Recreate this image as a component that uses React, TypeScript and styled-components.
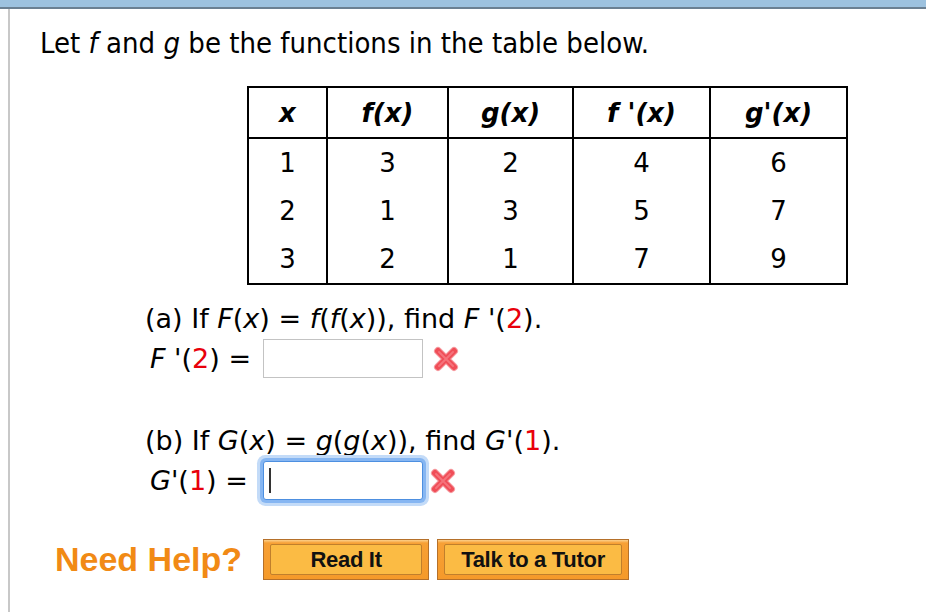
import styled, { createGlobalStyle } from 'styled-components';

const GlobalStyle = createGlobalStyle`
  html, body {
    margin: 0;
    padding: 0;
    background: #fff;
  }
  body {
    font-family: "DejaVu Sans", Verdana, sans-serif;
    color: #000;
  }
`;

const TopBar = styled.div`
  height: 7px;
  background: #9dc2df;
  border-bottom: 2px solid #6b8092;
`;

const Panel = styled.div`
  margin-left: 8px;
  border-left: 2px solid #c8c8c8;
  height: 603px;
  box-sizing: border-box;
  padding: 17px 0 0 30px;
`;

const Intro = styled.p`
  margin: 0;
  font-family: "DejaVu Sans Condensed", "DejaVu Sans", sans-serif;
  font-size: 29px;
  line-height: 34px;
`;

const FuncTable = styled.table`
  margin: 26px 0 0 207px;
  border-collapse: collapse;
  border: 2px solid #000;
  font-size: 26px;
`;

const HeadCell = styled.th<{ $w: number }>`
  width: ${(p) => p.$w}px;
  min-width: ${(p) => p.$w}px;
  height: 49px;
  padding: 0;
  border: 2px solid #000;
  font-weight: bold;
  font-style: italic;
  text-align: center;
`;

const Cell = styled.td`
  height: 48px;
  padding: 0;
  border-left: 2px solid #000;
  text-align: center;
  vertical-align: middle;
`;

const Part = styled.div<{ $top: number }>`
  margin: ${(p) => p.$top}px 0 0 105px;
  font-size: 27px;
  line-height: 34px;
`;

const AnswerRow = styled.div`
  display: flex;
  align-items: center;
  margin-top: 3px;
  padding-left: 5px;
`;

const Label = styled.span`
  width: 113px;
`;

const Red = styled.span`
  color: #e8000b;
`;

const AnswerInput = styled.input<{ $focused?: boolean }>`
  box-sizing: border-box;
  width: 160px;
  height: 39px;
  margin: 0;
  border: 1px solid ${(p) => (p.$focused ? '#4d8fe0' : '#c3c3c3')};
  border-radius: ${(p) => (p.$focused ? '3px' : '0')};
  box-shadow: ${(p) =>
    p.$focused ? '0 0 0 3px #86b6f2, 0 0 0 6px #c3dbf8' : 'none'};
  background: #fff;
  outline: none;
  font-size: 20px;
  padding: 0 6px;
`;

const Caret = styled.span`
  position: absolute;
  left: 6px;
  top: 7px;
  width: 2px;
  height: 25px;
  background: #333;
`;

const InputWrap = styled.span`
  position: relative;
  display: inline-flex;
`;

const CrossIcon = styled.svg<{ $gap: number }>`
  width: 26px;
  height: 26px;
  flex: none;
  margin-left: ${(p) => p.$gap}px;
`;

const HelpRow = styled.div`
  display: flex;
  align-items: center;
  margin: 39px 0 0 15px;
`;

const HelpLabel = styled.span`
  font-family: "Liberation Sans", Arial, sans-serif;
  font-weight: bold;
  font-size: 34px;
  color: #f18a15;
  margin-right: 21px;
`;

const HelpButton = styled.button<{ $w: number }>`
  width: ${(p) => p.$w}px;
  height: 41px;
  margin-right: 8px;
  padding: 4px 6px;
  box-sizing: border-box;
  background: linear-gradient(#fbcf8a 0, #f7a035 3px, #f59a2a 100%);
  border: 1px solid #b5702a;
  cursor: pointer;
  display: flex;
`;

const ButtonFace = styled.span`
  flex: 1;
  display: flex;
  align-items: center;
  justify-content: center;
  background: #fbbb44;
  border: 1px solid #c07f2c;
  border-radius: 2px;
  font-family: "Liberation Sans", Arial, sans-serif;
  font-weight: bold;
  font-size: 22px;
  color: #111;
  letter-spacing: -0.3px;
`;

const Cross = ({ gap }: { gap: number }) => (
  <CrossIcon viewBox="0 0 26 26" $gap={gap}>
    <g strokeLinecap="round">
      <path d="M5 5 L21 21 M21 5 L5 21" stroke="#f6a0a5" strokeWidth="8" />
      <path d="M5 5 L21 21 M21 5 L5 21" stroke="#f04e58" strokeWidth="6" />
      <path d="M6 6 L20 20 M20 6 L6 20" stroke="#f5737b" strokeWidth="2" />
    </g>
  </CrossIcon>
);

const rows = [
  [1, 3, 2, 4, 6],
  [2, 1, 3, 5, 7],
  [3, 2, 1, 7, 9],
];

const widths = [77, 119, 123, 135, 135];

export default function App() {
  return (
    <>
      <GlobalStyle />
      <TopBar />
      <Panel>
        <Intro>
          Let <i>f</i> and <i>g</i> be the functions in the table below.
        </Intro>
        <FuncTable>
          <thead>
            <tr>
              <HeadCell $w={widths[0]}>x</HeadCell>
              <HeadCell $w={widths[1]}>f(x)</HeadCell>
              <HeadCell $w={widths[2]}>g(x)</HeadCell>
              <HeadCell $w={widths[3]}>f '(x)</HeadCell>
              <HeadCell $w={widths[4]}>g'(x)</HeadCell>
            </tr>
          </thead>
          <tbody>
            {rows.map((r) => (
              <tr key={r[0]}>
                {r.map((v, i) => (
                  <Cell key={i}>{v}</Cell>
                ))}
              </tr>
            ))}
          </tbody>
        </FuncTable>

        <Part $top={17}>
          (a) If <i>F</i>(<i>x</i>) = <i>f</i>(<i>f</i>(<i>x</i>)), find <i>F</i> '(<Red>2</Red>).
          <AnswerRow>
            <Label>
              <i>F</i> '(<Red>2</Red>) =
            </Label>
            <AnswerInput type="text" />
            <Cross gap={10} />
          </AnswerRow>
        </Part>

        <Part $top={46}>
          (b) If <i>G</i>(<i>x</i>) = <i>g</i>(<i>g</i>(<i>x</i>)), find <i>G</i>'(<Red>1</Red>).
          <AnswerRow>
            <Label>
              <i>G</i>'(<Red>1</Red>) =
            </Label>
            <InputWrap>
              <AnswerInput type="text" $focused />
              <Caret />
            </InputWrap>
            <Cross gap={7} />
          </AnswerRow>
        </Part>

        <HelpRow>
          <HelpLabel>Need Help?</HelpLabel>
          <HelpButton $w={166}>
            <ButtonFace>Read It</ButtonFace>
          </HelpButton>
          <HelpButton $w={192}>
            <ButtonFace>Talk to a Tutor</ButtonFace>
          </HelpButton>
        </HelpRow>
      </Panel>
    </>
  );
}
